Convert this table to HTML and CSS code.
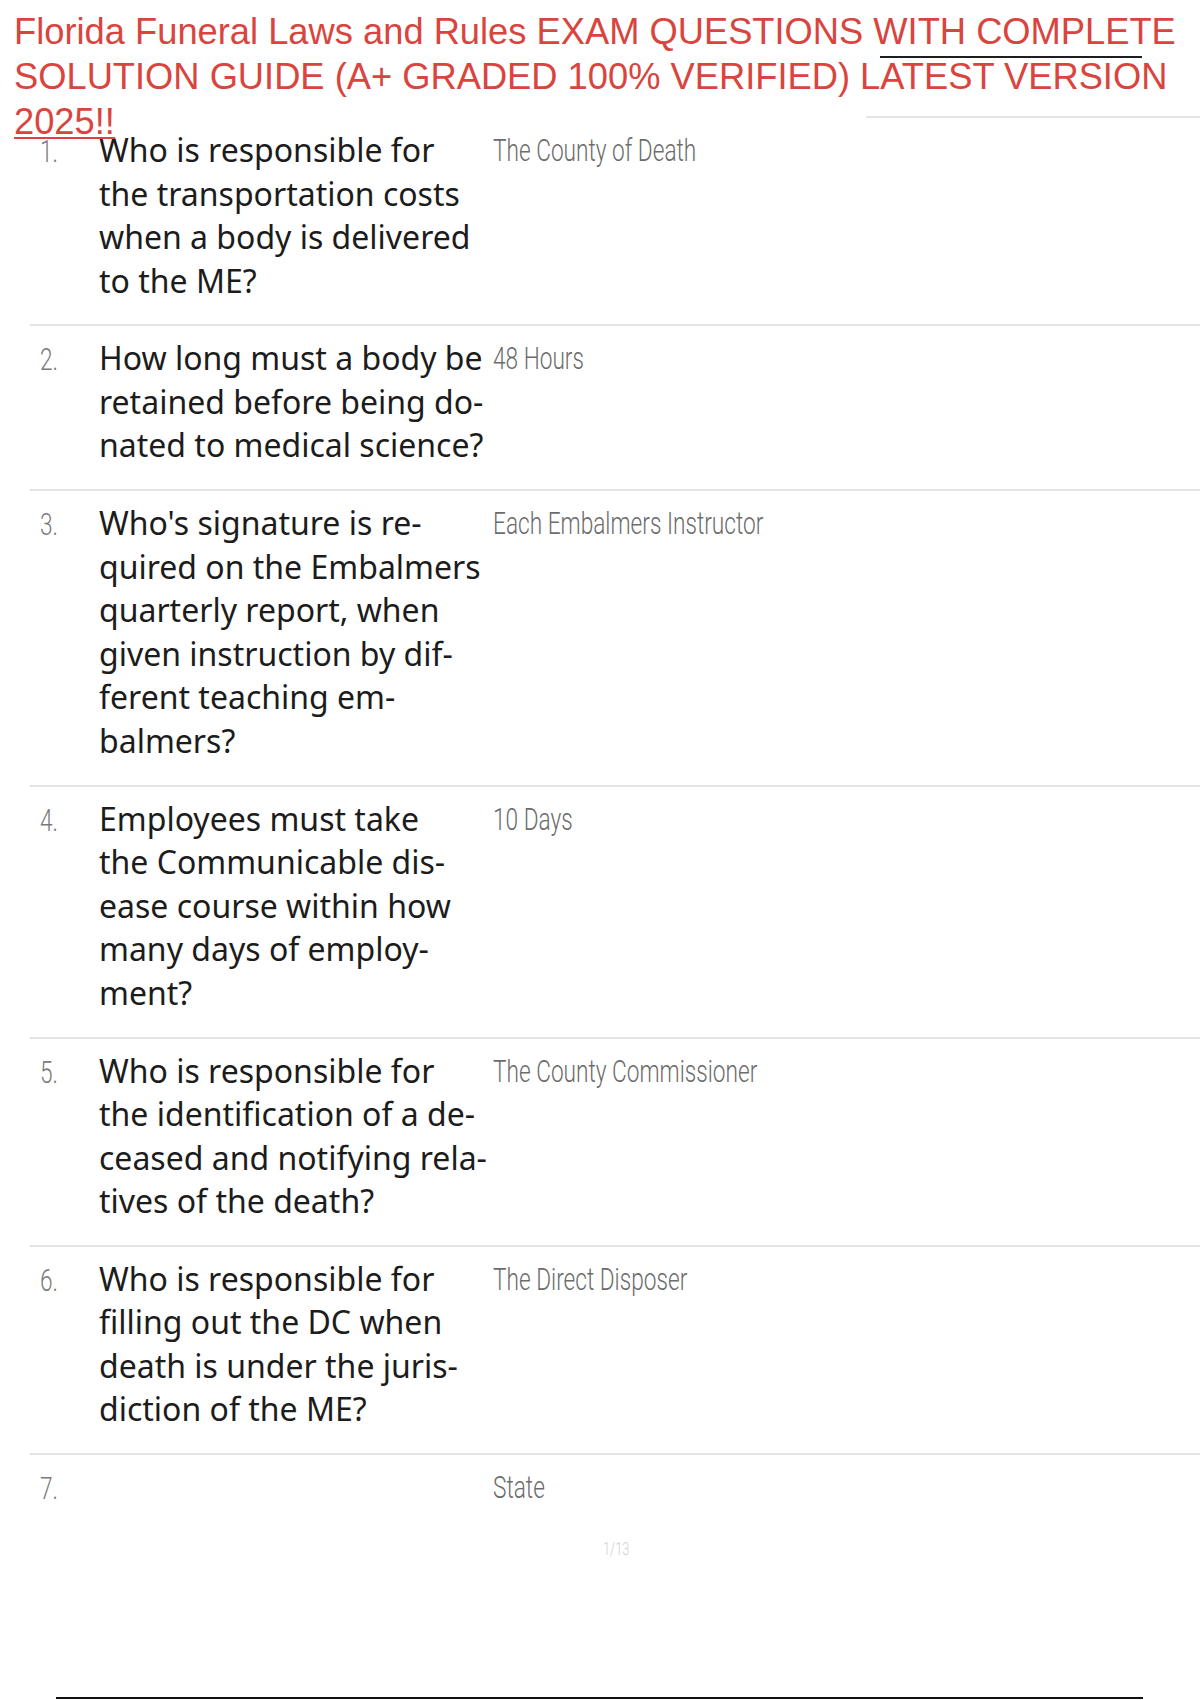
FILE: index.html
```html
<!DOCTYPE html>
<html lang="en">
<head>
<meta charset="utf-8">
<title>Florida Funeral Laws and Rules</title>
<link rel="stylesheet" href="styles.css">
</head>
<body>
<h1 class="title">Florida Funeral Laws and Rules EXAM QUESTIONS WITH COMPLETE<br>SOLUTION GUIDE (A+ GRADED 100% VERIFIED) LATEST VERSION<br><span class="year">2025!!</span></h1>
<div class="title-mark"></div>
<main class="sheet">
  <div class="rows">
    <div class="row">
      <div class="num"><span class="cond">1.</span></div>
      <div class="q">Who is responsible for<br>the transportation costs<br>when a body is delivered<br>to the ME?</div>
      <div class="a"><span class="cond">The County of Death</span></div>
    </div>
    <div class="row">
      <div class="num"><span class="cond">2.</span></div>
      <div class="q">How long must a body be<br>retained before being do-<br>nated to medical science?</div>
      <div class="a"><span class="cond">48 Hours</span></div>
    </div>
    <div class="row">
      <div class="num"><span class="cond">3.</span></div>
      <div class="q">Who's signature is re-<br>quired on the Embalmers<br>quarterly report, when<br>given instruction by dif-<br>ferent teaching em-<br>balmers?</div>
      <div class="a"><span class="cond">Each Embalmers Instructor</span></div>
    </div>
    <div class="row">
      <div class="num"><span class="cond">4.</span></div>
      <div class="q">Employees must take<br>the Communicable dis-<br>ease course within how<br>many days of employ-<br>ment?</div>
      <div class="a"><span class="cond">10 Days</span></div>
    </div>
    <div class="row">
      <div class="num"><span class="cond">5.</span></div>
      <div class="q">Who is responsible for<br>the identification of a de-<br>ceased and notifying rela-<br>tives of the death?</div>
      <div class="a"><span class="cond">The County Commissioner</span></div>
    </div>
    <div class="row">
      <div class="num"><span class="cond">6.</span></div>
      <div class="q">Who is responsible for<br>filling out the DC when<br>death is under the juris-<br>diction of the ME?</div>
      <div class="a"><span class="cond">The Direct Disposer</span></div>
    </div>
    <div class="row row-last">
      <div class="num"><span class="cond">7.</span></div>
      <div class="q"></div>
      <div class="a"><span class="cond">State</span></div>
    </div>
  </div>
  <div class="pageno"><span class="cond">1/13</span></div>
  <div class="rule"></div>
</main>
</body>
</html>
```

FILE: styles.css
```css
html, body {
  margin: 0;
  padding: 0;
  background: #ffffff;
}

body {
  width: 1200px;
  height: 1700px;
  position: relative;
  overflow: hidden;
  display: flex;
  flex-direction: column;
  font-family: "Noto Sans", "Open Sans", sans-serif;
}

.title {
  position: absolute;
  top: 0;
  left: 0;
  z-index: 2;
  width: 866px;
  height: 134px;
  margin: 0;
  padding: 9px 0 0 14px;
  box-sizing: border-box;
  background: #ffffff;
  font-family: "Liberation Sans", Arial, sans-serif;
  font-weight: 400;
  font-size: 36.3px;
  line-height: 45px;
  color: #d9453e;
  white-space: nowrap;
}

.year {
  text-decoration: underline;
  text-decoration-thickness: 2px;
  text-underline-offset: 3px;
}

.title-mark {
  position: absolute;
  top: 56px;
  left: 880px;
  z-index: 3;
  width: 262px;
  height: 2px;
  background: #1e1e1e;
}

.sheet {
  flex: 1;
  display: flex;
  flex-direction: column;
  padding: 116px 0 0 30px;
}

.rows {
  border-top: 2px solid #e4e4e4;
}

.row {
  display: grid;
  grid-template-columns: 69px 394px 1fr;
  padding: 10px 0 22.4px;
  border-bottom: 2px solid #e4e4e4;
}

.row-last {
  border-bottom: none;
}

.num {
  padding-top: 2px;
  padding-left: 10px;
  font-family: Roboto, "Liberation Sans", sans-serif;
  font-weight: 300;
  font-size: 32px;
  line-height: 43.5px;
  color: #7a7a7a;
}

.q {
  font-size: 32px;
  line-height: 43.5px;
  color: #1c1c1c;
  white-space: nowrap;
}

.a {
  padding-top: 1px;
  font-family: Roboto, "Liberation Sans", sans-serif;
  font-weight: 300;
  font-size: 32px;
  line-height: 43.5px;
  color: #6c6c6c;
  white-space: nowrap;
}

.cond {
  display: inline-block;
  transform: scaleX(0.708);
  transform-origin: left center;
}

.pageno {
  margin-top: 6px;
  padding-left: 573px;
  font-family: Roboto, sans-serif;
  font-weight: 300;
  font-size: 18px;
  line-height: 20px;
  color: #cfcfcf;
}

.rule {
  margin: auto 0 1px 26px;
  width: 1087px;
  height: 2px;
  background: #111111;
}
```
